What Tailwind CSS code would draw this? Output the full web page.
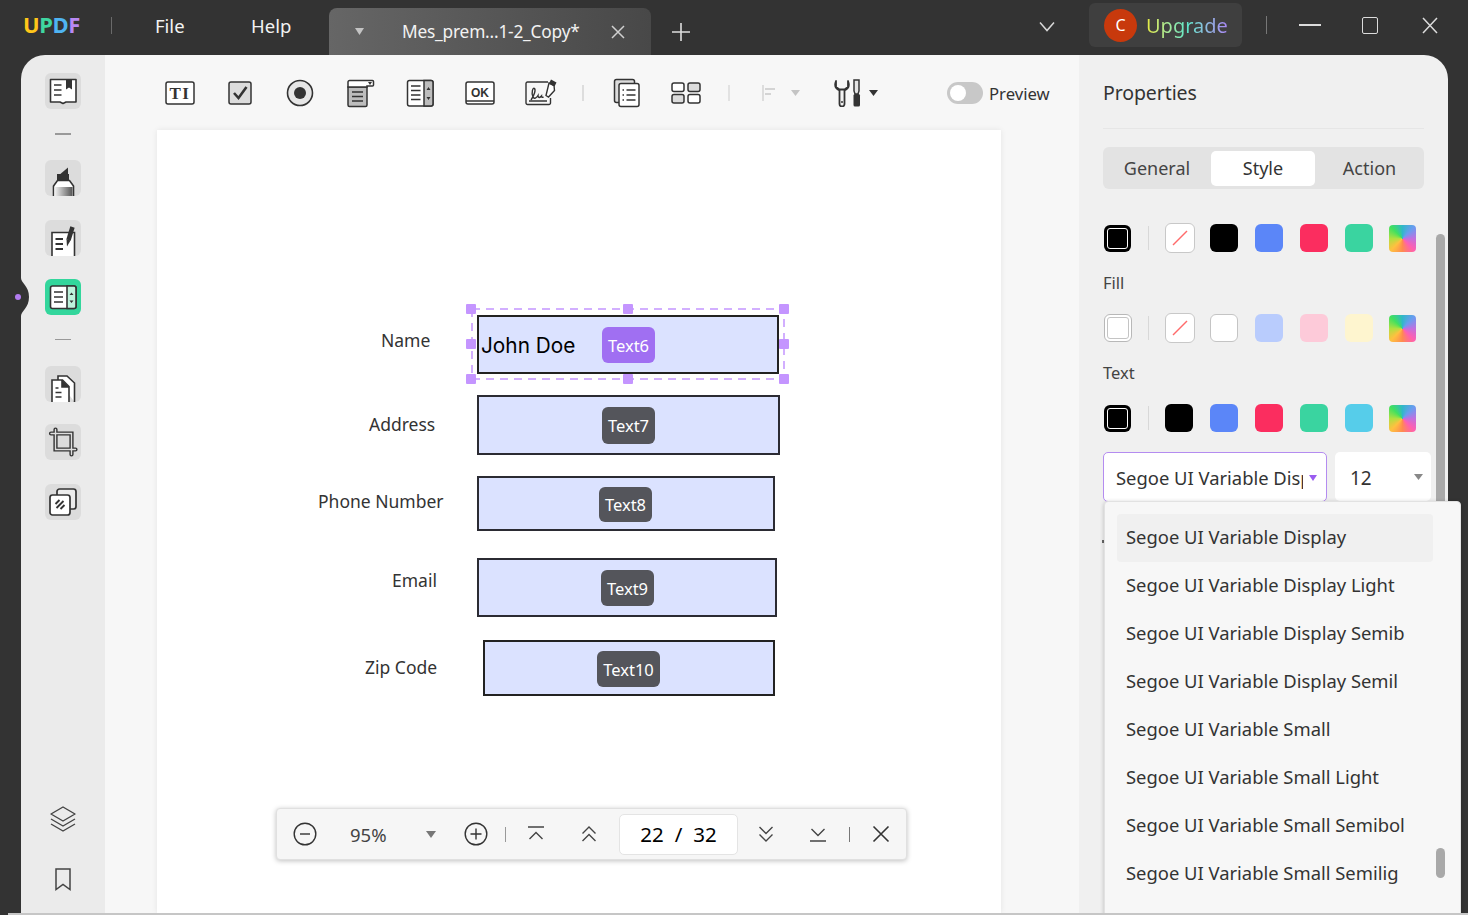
<!doctype html>
<html lang="en">
<head>
  <meta charset="utf-8">
  <script src="https://cdn.jsdelivr.net/npm/@tailwindcss/browser@4"></script>
  <title>UPDF</title>
</head>
<body class="bg-[#333333]">
<div class="relative w-[1468px] h-[915px] overflow-hidden bg-[#333333] font-['Noto_Sans',sans-serif] text-[#333333]">

  <!-- title bar -->
  <header class="flex items-start h-[55px] text-[#f2f2f2]">
    <div class="ml-[23px] w-[57px] mt-[10px] text-[22px] leading-[28px] font-bold flex tracking-[-0.4px]">
      <span class="text-[#ffc61a]">U</span><span class="text-[#3fd6a0]">P</span><span class="text-[#4fb4f2]">D</span><span class="text-[#b888f2]">F</span>
    </div>
    <div class="ml-[31px] mt-[17px] w-px h-[17px] bg-[#6a6a6a]"></div>
    <div class="ml-[43px] mt-[12px] w-[96px] text-[18.5px] leading-[28px]">File</div>
    <div class="w-[78px] mt-[12px] text-[18.5px] leading-[28px]">Help</div>
    <div class="mt-[8px] w-[322px] h-[47px] rounded-t-[8px] bg-linear-to-r from-[#666666] to-[#484848] flex items-center">
      <svg class="ml-[26px] w-[9px] h-[7px]" viewBox="0 0 9 7"><path d="M0 0h9L4.5 7z" fill="#c4c4c4"/></svg>
      <span class="ml-[38px] w-[178px] text-[17.3px] whitespace-nowrap tracking-[-0.2px]">Mes_prem...1-2_Copy*</span>
      <svg class="ml-[31px] w-[14px] h-[14px]" viewBox="0 0 14 14" fill="none" stroke="#d0d0d0" stroke-width="1.5"><path d="M1 1l12 12M13 1L1 13"/></svg>
    </div>
    <svg class="ml-[21px] mt-[23px] w-[18px] h-[18px]" viewBox="0 0 18 18" stroke="#dedede" stroke-width="1.6"><path d="M9 0v18M0 9h18"/></svg>
    <svg class="ml-[349px] mt-[21px] w-[16px] h-[11px]" viewBox="0 0 16 11" fill="none" stroke="#d8d8d8" stroke-width="1.5"><path d="M1 1.5l7 8 7-8"/></svg>
    <div class="ml-[34px] mt-[3px] w-[153px] h-[44px] rounded-[6px] bg-[#3f3f3f] flex items-center">
      <div class="ml-[15px] w-[33px] h-[33px] rounded-full bg-[#c8390c] text-white text-[16px] flex items-center justify-center">C</div>
      <span class="ml-[9px] mt-px text-[20px] bg-linear-to-r from-[#e6ea3a] via-[#5ce6c8] to-[#a884f4] bg-clip-text text-transparent">Upgrade</span>
    </div>
    <div class="ml-[24px] mt-[16px] w-px h-[18px] bg-[#777777]"></div>
    <div class="ml-[32px] mt-[24px] w-[22px] h-[1.5px] bg-[#dcdcdc]"></div>
    <div class="ml-[41px] mt-[17px] w-[16px] h-[17px] border-[1.5px] border-[#dcdcdc] rounded-[2px]"></div>
    <svg class="ml-[44px] mt-[17px] w-[16px] h-[17px]" viewBox="0 0 16 17" fill="none" stroke="#dcdcdc" stroke-width="1.5"><path d="M1 1l14 15M15 1L1 16"/></svg>
  </header>

  <!-- workspace -->
  <main class="ml-[21px] w-[1427px] h-[858px] flex rounded-t-[24px] overflow-hidden">
    <!-- left rail -->
    <aside class="w-[84px] bg-[#ebebeb] flex flex-col items-center shrink-0">
      <div class="mt-[18px] w-[36px] h-[36px] rounded-[6px] bg-[#dcdcdc]">
        <svg viewBox="0 0 36 36" fill="none" stroke="#333" stroke-width="1.6"><path d="M5.5 6.5h25.500v22.500h-10l-3 1.500-3-1.500h-9.500z" fill="#fff" stroke-linejoin="round"/><path d="M9 12h7.500M9 17h7.500M9 22h7.500"/><path d="M21 6h6v10.500l-3-2-3 2z" fill="#333" stroke="none"/></svg>
      </div>
      <div class="mt-[24px] w-[16px] h-[1.5px] bg-[#999999]"></div>
      <div class="mt-[25px] w-[36px] h-[36px] rounded-[6px] bg-[#dcdcdc] overflow-hidden">
        <svg viewBox="0 0 36 36" fill="none" stroke="#333" stroke-width="1.6"><defs><linearGradient id="hl" x1="0" x2="1"><stop offset="0" stop-color="#f4f4f4"/><stop offset="1" stop-color="#555"/></linearGradient></defs><path d="M13 16l10-8.500v8.500z" fill="#333" stroke="none"/><rect x="12" y="14" width="12" height="6" fill="#333" stroke="none"/><path d="M8.500 36v-10l4-5.500h12l4 5.500v10" fill="#fff"/><rect x="9.500" y="27" width="18" height="9" fill="url(#hl)" stroke="none"/></svg>
      </div>
      <div class="mt-[24px] w-[36px] h-[36px] rounded-[6px] bg-[#dcdcdc] overflow-hidden">
        <svg viewBox="0 0 36 36" fill="none" stroke="#333" stroke-width="1.6"><path d="M7 36V12.500h22.500V36" fill="#fff"/><path d="M10.500 19h7.500M10.500 24h7.500M10.500 29h7.500" stroke-width="1.800"/><path d="M27.500 7l-4 13" stroke-width="4.500"/><path d="M21.500 19l4 1.500-3.500 6z" fill="#333" stroke="none"/></svg>
      </div>
      <div class="mt-[23px] w-[36px] h-[36px] rounded-[6px] bg-[#33d69c]">
        <svg viewBox="0 0 36 36" fill="none" stroke="#333" stroke-width="1.6"><rect x="5.500" y="7" width="25.500" height="22.500" rx="2" fill="#fff"/><path d="M22 7h7a2 2 0 0 1 2 2v18.500a2 2 0 0 1-2 2h-7z" fill="#bdf2dc"/><path d="M9 13h9M9 18h9M9 23h9"/><path d="M26.500 13.500l-2 2.500h4zM26.500 24l-2-2.500h4z" fill="#333" stroke="none"/></svg>
      </div>
      <div class="mt-[24px] w-[16px] h-px bg-[#999999]"></div>
      <div class="mt-[26px] w-[36px] h-[36px] rounded-[6px] bg-[#dcdcdc] overflow-hidden">
        <svg viewBox="0 0 36 36" fill="none" stroke="#333" stroke-width="1.600"><path d="M13 14v-4h9l7.500 7v19" fill="#fff"/><path d="M7 36V14h10.500l6.500 6.500V36" fill="#fff"/><path d="M17 14v7h7" fill="#333"/><path d="M10.500 22h3M10.500 26.500h6M10.500 31h6"/></svg>
      </div>
      <div class="mt-[22px] w-[36px] h-[36px] rounded-[6px] bg-[#dcdcdc]">
        <svg viewBox="0 0 36 36" fill="none"><g stroke="#333" stroke-width="4.200" stroke-linecap="round"><path d="M10.500 5.500v20h20M6 9.500h20.500v21"/></g><g stroke="#dedede" stroke-width="1.400" stroke-linecap="round"><path d="M10.500 5.500v20h20M6 9.500h20.500v21"/></g></svg>
      </div>
      <div class="mt-[24px] w-[36px] h-[36px] rounded-[6px] bg-[#dcdcdc]">
        <svg viewBox="0 0 36 36" fill="none" stroke="#333" stroke-width="1.700"><rect x="12" y="5" width="19" height="20" rx="2.500" fill="#ececec"/><rect x="5" y="11" width="20" height="20" rx="2.500" fill="#fff"/><path d="M10.500 20l4-4M11.500 24l7-7M15.500 25l4-4" stroke-width="1.900"/></svg>
      </div>
      <svg class="mt-[285px] w-[26px] h-[28px]" viewBox="0 0 26 28" fill="none" stroke="#444" stroke-width="1.400" stroke-linejoin="round"><path d="M13 2l12 7-12 7-12-7z"/><path d="M1 14l12 7 12-7M1 19l12 7 12-7"/></svg>
      <svg class="mt-[35px] w-[16px] h-[23px]" viewBox="0 0 16 23" fill="none" stroke="#444" stroke-width="1.500"><path d="M1 1h14v20.500l-7-5-7 5z"/></svg>
    </aside>

    <!-- centre -->
    <section class="relative w-[974px] bg-[#f7f7f7] flex flex-col shrink-0">
      <div class="h-[75px] flex items-center shrink-0">
        <div class="ml-[60px] w-[30px] h-[30px]">
          <svg viewBox="0 0 30 30" fill="none" stroke="#333" stroke-width="1.500"><rect x="1" y="4" width="28" height="22" rx="2" fill="#fff"/><text x="15" y="21" text-anchor="middle" font-family="Liberation Serif" font-size="17" font-weight="700" letter-spacing="1.500" fill="#333" stroke="none">TI</text></svg>
        </div>
        <div class="ml-[30px] w-[30px] h-[30px]">
          <svg viewBox="0 0 30 30" fill="none" stroke="#333" stroke-width="1.500"><rect x="4" y="4" width="22" height="22" rx="2" fill="#dcdcdc"/><path d="M9 15l4.500 5 8-11" stroke-width="2.600"/></svg>
        </div>
        <div class="ml-[30px] w-[30px] h-[30px]">
          <svg viewBox="0 0 30 30" fill="none"><circle cx="15" cy="15" r="12.500" fill="#e6e6e6" stroke="#333" stroke-width="1.600"/><circle cx="15" cy="15" r="6" fill="#333"/></svg>
        </div>
        <div class="ml-[30px] w-[30px] h-[30px]">
          <svg viewBox="0 0 30 30" fill="none" stroke="#333" stroke-width="1.500"><path d="M3 9h19v18a1.500 1.500 0 0 1-1.500 1.500h-16A1.500 1.500 0 0 1 3 27z" fill="#bdbdbd"/><path d="M4.500 2.500H27.500a1 1 0 0 1 1 1V7a1 1 0 0 1-1 1H22V9H3V4a1.500 1.500 0 0 1 1.500-1.500z" fill="#fff"/><path d="M7 14h11M7 18.500h11M7 23h11"/><path d="M23 4h4l-2 3z" fill="#333" stroke="none"/></svg>
        </div>
        <div class="ml-[30px] w-[30px] h-[30px]">
          <svg viewBox="0 0 30 30" fill="none" stroke="#333" stroke-width="1.500"><rect x="2.500" y="2.500" width="25.500" height="25.500" rx="2" fill="#fff"/><path d="M19 2.500h7a2 2 0 0 1 2 2V26a2 2 0 0 1-2 2h-7z" fill="#bdbdbd"/><path d="M6 8h9.500M6 12.500h9.500M6 17h9.500M6 21.500h9.500"/><path d="M23.500 9l-2 3h4zM23.500 22l-2-3h4z" fill="#333" stroke="none"/></svg>
        </div>
        <div class="ml-[30px] w-[30px] h-[30px]">
          <svg viewBox="0 0 30 30" fill="none" stroke="#333" stroke-width="1.500"><rect x="1" y="4" width="28" height="22" rx="2" fill="#fff"/><path d="M1 23h28" /><text x="15" y="18.500" text-anchor="middle" font-family="Liberation Sans" font-size="12" font-weight="700" fill="#333" stroke="none">OK</text></svg>
        </div>
        <div class="ml-[30px] w-[34px] h-[30px]">
          <svg viewBox="0 0 34 30" fill="none" stroke="#333" stroke-width="1.400"><path d="M23 4H2.500a1.500 1.500 0 0 0-1.500 1.500V25a1.500 1.500 0 0 0 1.500 1.500H24a1.500 1.500 0 0 0 1.500-1.500v-5"/><path d="M6 22c3-4 5-10 3.500-11.500S6 14 8 19c1 2.500 3.500 1 5-1.500 0 2.500 2 2.500 3.500.5 0 1.500 1 1.500 2 1"/><path d="M4 23h18"/><path d="M24 5l5 2.500 .5 5-6 6.500-2.500-1.500z" fill="#fff"/><path d="M26 1.500l5.500 3-2 4-5.500-3z" fill="#333" stroke="none"/></svg>
        </div>
        <div class="ml-[23px] w-[2px] h-[16px] bg-[#dddddd]"></div>
        <div class="ml-[29px] w-[30px] h-[30px]">
          <svg viewBox="0 0 30 30" fill="none" stroke="#333" stroke-width="1.500"><rect x="1.500" y="1.500" width="20" height="23" rx="2" fill="#dcdcdc"/><rect x="6" y="5.500" width="20" height="23" rx="2" fill="#fff"/><path d="M13.500 12h9M13.500 17h9M13.500 22h9M9.500 12h1.500M9.500 17h1.500M9.500 22h1.500"/></svg>
        </div>
        <div class="ml-[28px] w-[30px] h-[22px]">
          <svg viewBox="0 0 30 22" fill="none" stroke="#333" stroke-width="1.500"><rect x="1" y="1" width="12" height="8.500" rx="2" fill="#fff"/><rect x="17" y="1" width="12" height="8.500" rx="2" fill="#dcdcdc"/><rect x="1" y="12.500" width="12" height="8.500" rx="2" fill="#dcdcdc"/><rect x="17" y="12.500" width="12" height="8.500" rx="2" fill="#fff"/></svg>
        </div>
        <div class="ml-[27px] w-[2px] h-[16px] bg-[#e2e2e2]"></div>
        <div class="ml-[31px] w-[20px] h-[18px]">
          <svg viewBox="0 0 20 18" fill="none" stroke="#d4d4d4" stroke-width="2"><path d="M2 1v16" stroke-width="1.500"/><path d="M4 5h10M4 10h6"/></svg>
        </div>
        <svg class="ml-[10px] w-[9px] h-[6px]" viewBox="0 0 9 6"><path d="M0 0h9L4.500 6z" fill="#c4c4c4"/></svg>
        <div class="ml-[34px] w-[30px] h-[28px]">
          <svg viewBox="0 0 30 28" fill="none" stroke="#333" stroke-width="1.800"><path d="M2 2c-2 5 0 8 3.500 9.500V25a2.500 2.500 0 0 0 5 0V11.500C14 10 16 7 14 2v6l-3.500 2.500h-5L2 8z" fill="#f2f2f2" stroke-linejoin="round"/><circle cx="8" cy="23" r="1" fill="#333" stroke="none"/><path d="M20 1h5v11l-1 3h-3l-1-3z" fill="#e4e4e4" stroke-width="1.500"/><rect x="19.500" y="15" width="6.500" height="12.500" rx="1.500" fill="#333" stroke="none"/></svg>
        </div>
        <svg class="ml-[5px] w-[9px] h-[6px]" viewBox="0 0 9 6"><path d="M0 0h9L4.500 6z" fill="#333"/></svg>
        <div class="ml-[69px] w-[36px] h-[22px] rounded-full bg-[#c8c8c8] flex items-center">
          <div class="ml-[3px] w-[16px] h-[16px] rounded-full bg-white"></div>
        </div>
        <span class="ml-[6px] mt-[2px] text-[16.7px] whitespace-nowrap">Preview</span>
      </div>

      <div class="ml-[52px] w-[844px] flex-1 relative bg-white shadow-[0_0_6px_rgba(0,0,0,0.08)]">
        <span class="absolute left-[224px] top-[197px] text-[17.5px] leading-[26px]">Name</span>
        <span class="absolute left-[212px] top-[281px] text-[17.5px] leading-[26px]">Address</span>
        <span class="absolute left-[161px] top-[358px] text-[17.5px] leading-[26px]">Phone Number</span>
        <span class="absolute left-[235px] top-[437px] text-[17.5px] leading-[26px]">Email</span>
        <span class="absolute left-[208px] top-[524px] text-[17.5px] leading-[26px]">Zip Code</span>

        <div class="absolute left-[320px] top-[185px] w-[302px] h-[59px] border-2 border-[#222222] bg-[#dbe2ff] flex items-center pl-[2px] pt-[3px] text-[20.8px] text-black font-['Inter',sans-serif]">John Doe</div>
        <div class="absolute left-[320px] top-[265px] w-[303px] h-[60px] border-2 border-[#2b2b33] bg-[#dbe2ff]"></div>
        <div class="absolute left-[320px] top-[346px] w-[298px] h-[55px] border-2 border-[#2b2b33] bg-[#dbe2ff]"></div>
        <div class="absolute left-[320px] top-[428px] w-[300px] h-[59px] border-2 border-[#2b2b33] bg-[#dbe2ff]"></div>
        <div class="absolute left-[326px] top-[510px] w-[292px] h-[56px] border-2 border-[#222222] bg-[#dbe2ff]"></div>

        <div class="absolute left-[445px] top-[197px] w-[53px] h-[36px] rounded-[6px] pt-[2px] bg-[#a06ff2] text-white text-[16.5px] flex items-center justify-center">Text6</div>
        <div class="absolute left-[445px] top-[277px] w-[53px] h-[37px] rounded-[6px] pt-[2px] bg-[#54555b] text-white text-[16.5px] flex items-center justify-center">Text7</div>
        <div class="absolute left-[442px] top-[357px] w-[53px] h-[35px] rounded-[6px] pt-[2px] bg-[#54555b] text-white text-[16.5px] flex items-center justify-center">Text8</div>
        <div class="absolute left-[444px] top-[440px] w-[53px] h-[36px] rounded-[6px] pt-[2px] bg-[#54555b] text-white text-[16.5px] flex items-center justify-center">Text9</div>
        <div class="absolute left-[440px] top-[521px] w-[63px] h-[36px] rounded-[6px] pt-[2px] bg-[#54555b] text-white text-[16.5px] flex items-center justify-center">Text10</div>

        <!-- selection box -->
        <svg class="absolute left-[314px] top-[178px] w-[314px] h-[72px]" viewBox="0 0 314 72" fill="none"><rect x="1" y="1" width="312" height="70" stroke="#c495ff" stroke-width="1.500" stroke-dasharray="8 6"/></svg>
        <div class="absolute left-[309px] top-[174px] w-[10px] h-[10px] rounded-[1px] bg-[#c495ff]"></div>
        <div class="absolute left-[466px] top-[174px] w-[10px] h-[10px] rounded-[1px] bg-[#c495ff]"></div>
        <div class="absolute left-[622px] top-[174px] w-[10px] h-[10px] rounded-[1px] bg-[#c495ff]"></div>
        <div class="absolute left-[309px] top-[209px] w-[10px] h-[10px] rounded-[1px] bg-[#c495ff]"></div>
        <div class="absolute left-[622px] top-[209px] w-[10px] h-[10px] rounded-[1px] bg-[#c495ff]"></div>
        <div class="absolute left-[309px] top-[244px] w-[10px] h-[10px] rounded-[1px] bg-[#c495ff]"></div>
        <div class="absolute left-[466px] top-[244px] w-[10px] h-[10px] rounded-[1px] bg-[#c495ff]"></div>
        <div class="absolute left-[622px] top-[244px] w-[10px] h-[10px] rounded-[1px] bg-[#c495ff]"></div>
      </div>

      <!-- floating page bar -->
      <div class="absolute left-[171px] top-[753px] w-[631px] h-[52px] rounded-[4px] bg-[#f6f6f6] border border-[#e0e0e0] shadow-[0_1px_5px_rgba(0,0,0,0.25)] flex items-center">
        <svg class="ml-[16px] w-[24px] h-[24px]" viewBox="0 0 24 24" fill="none" stroke="#333" stroke-width="1.400"><circle cx="12" cy="12" r="10.800"/><path d="M7 12h10"/></svg>
        <span class="ml-[33px] mt-[2px] w-[76px] text-[18.5px] text-[#444444]">95%</span>
        <svg class="w-[10px] h-[7px]" viewBox="0 0 10 7"><path d="M0 0h10L5 7z" fill="#777"/></svg>
        <svg class="ml-[28px] w-[24px] h-[24px]" viewBox="0 0 24 24" fill="none" stroke="#333" stroke-width="1.400"><circle cx="12" cy="12" r="10.800"/><path d="M6.500 12h11M12 6.500v11"/></svg>
        <div class="ml-[17px] w-px h-[15px] bg-[#999999]"></div>
        <svg class="ml-[21px] w-[18px] h-[16px]" viewBox="0 0 18 16" fill="none" stroke="#444" stroke-width="1.400"><path d="M1 1h16M2.500 13L9 6.500l6.500 6.500"/></svg>
        <svg class="ml-[35px] w-[18px] h-[18px]" viewBox="0 0 18 18" fill="none" stroke="#444" stroke-width="1.400"><path d="M2.500 8.500L9 2l6.500 6.500M2.500 16L9 9.500l6.500 6.500"/></svg>
        <div class="ml-[21px] w-[119px] h-[41px] rounded-[5px] bg-white border border-[#e4e4e4] flex items-center justify-center text-black text-[20.5px] gap-[11px]">
          <span>22</span><span>/</span><span>32</span>
        </div>
        <svg class="ml-[19px] w-[18px] h-[18px]" viewBox="0 0 18 18" fill="none" stroke="#444" stroke-width="1.400"><path d="M2.500 2L9 8.500 15.500 2M2.500 9.500L9 16l6.500-6.500"/></svg>
        <svg class="ml-[34px] w-[18px] h-[16px]" viewBox="0 0 18 16" fill="none" stroke="#444" stroke-width="1.400"><path d="M2.500 3L9 9.500 15.500 3M1 15h16"/></svg>
        <div class="ml-[22px] w-px h-[15px] bg-[#777777]"></div>
        <svg class="ml-[22px] w-[18px] h-[18px]" viewBox="0 0 18 18" fill="none" stroke="#333" stroke-width="1.600"><path d="M1.500 1.500l15 15M16.500 1.500l-15 15"/></svg>
      </div>
    </section>

    <!-- properties -->
    <aside class="relative w-[369px] shrink-0 bg-[#f0f0f0] pl-[24px] pr-[24px]">
      <div class="h-[74px] border-b border-[#e6e6e6] pt-[23px] text-[19.5px] leading-[30px] tracking-[-0.1px]">Properties</div>
      <div class="mt-[18px] h-[42px] rounded-[6px] bg-[#e3e3e3] flex items-center text-[18px]">
        <div class="w-[108px] pt-px text-center text-[#444444]">General</div>
        <div class="w-[104px] h-[35px] pt-px rounded-[5px] bg-white flex items-center justify-center">Style</div>
        <div class="flex-1 pt-px text-center text-[#444444]">Action</div>
      </div>

      <div class="mt-[35px] h-[28px] flex items-center">
        <div class="ml-px w-[27px] h-[27px] rounded-[6px] bg-black p-[3px]"><div class="w-full h-full border-[1.5px] border-white rounded-[3px]"></div></div>
        <div class="ml-[17px] w-px h-[24px] bg-[#d8d8d8]"></div>
        <div class="ml-[16px] w-[30px] h-[30px] rounded-[6px] bg-white border border-[#c8c8c8] flex items-center justify-center"><svg class="w-[16px] h-[16px]" viewBox="0 0 16 16"><path d="M1 15L15 1" stroke="#ff6b6b" stroke-width="1.400"/></svg></div>
        <div class="ml-[15px] w-[28px] h-[28px] rounded-[6px] bg-black"></div>
        <div class="ml-[17px] w-[28px] h-[28px] rounded-[6px] bg-[#5b86f8]"></div>
        <div class="ml-[17px] w-[28px] h-[28px] rounded-[6px] bg-[#fb2d5f]"></div>
        <div class="ml-[17px] w-[28px] h-[28px] rounded-[6px] bg-[#3ad4a0]"></div>
        <div class="ml-[16px] w-[27px] h-[27px] rounded-[4px] bg-[conic-gradient(#30b8c8,#6a9cf0,#c070e0,#ff60b0,#ff8a50,#ffc040,#b0e040,#40e060,#30b8c8)]"></div>
      </div>
      <div class="mt-[18px] h-[26px] leading-[26px] text-[16.5px] text-[#444444]">Fill</div>
      <div class="mt-[18px] h-[28px] flex items-center">
        <div class="ml-px w-[28px] h-[28px] rounded-[6px] bg-white border-[1.5px] border-[#b8b8b8] p-[2px]"><div class="w-full h-full border border-[#c4c4c4] rounded-[3px]"></div></div>
        <div class="ml-[16px] w-px h-[24px] bg-[#d8d8d8]"></div>
        <div class="ml-[16px] w-[30px] h-[30px] rounded-[6px] bg-white border border-[#c8c8c8] flex items-center justify-center"><svg class="w-[16px] h-[16px]" viewBox="0 0 16 16"><path d="M1 15L15 1" stroke="#ff6b6b" stroke-width="1.400"/></svg></div>
        <div class="ml-[15px] w-[28px] h-[28px] rounded-[6px] bg-white border-[1.5px] border-[#c4c4c4]"></div>
        <div class="ml-[17px] w-[28px] h-[28px] rounded-[6px] bg-[#b9ccfd]"></div>
        <div class="ml-[17px] w-[28px] h-[28px] rounded-[6px] bg-[#fdcad9]"></div>
        <div class="ml-[17px] w-[28px] h-[28px] rounded-[6px] bg-[#fef5cf]"></div>
        <div class="ml-[16px] w-[27px] h-[27px] rounded-[4px] bg-[conic-gradient(#30b8c8,#6a9cf0,#c070e0,#ff60b0,#ff8a50,#ffc040,#b0e040,#40e060,#30b8c8)]"></div>
      </div>
      <div class="mt-[18px] h-[26px] leading-[26px] text-[16.5px] text-[#444444]">Text</div>
      <div class="mt-[18px] h-[28px] flex items-center">
        <div class="ml-px w-[27px] h-[27px] rounded-[6px] bg-black p-[3px]"><div class="w-full h-full border-[1.5px] border-white rounded-[3px]"></div></div>
        <div class="ml-[17px] w-px h-[24px] bg-[#d8d8d8]"></div>
        <div class="ml-[16px] w-[28px] h-[28px] rounded-[6px] bg-black"></div>
        <div class="ml-[17px] w-[28px] h-[28px] rounded-[6px] bg-[#5b86f8]"></div>
        <div class="ml-[17px] w-[28px] h-[28px] rounded-[6px] bg-[#fb2d5f]"></div>
        <div class="ml-[17px] w-[28px] h-[28px] rounded-[6px] bg-[#3ad4a0]"></div>
        <div class="ml-[17px] w-[28px] h-[28px] rounded-[6px] bg-[#56cdea]"></div>
        <div class="ml-[16px] w-[27px] h-[27px] rounded-[4px] bg-[conic-gradient(#30b8c8,#6a9cf0,#c070e0,#ff60b0,#ff8a50,#ffc040,#b0e040,#40e060,#30b8c8)]"></div>
      </div>
      <div class="mt-[20px] flex w-[328px]">
        <div class="w-[224px] h-[50px] rounded-[5px] bg-white border-[1.5px] border-[#b48cf0] flex items-center pl-[12px] pt-[2px] text-[18.4px]">
          <span class="w-[187px] overflow-hidden whitespace-nowrap">Segoe UI Variable Display</span>
          <svg class="ml-[6px] w-[8px] h-[6px]" viewBox="0 0 8 6"><path d="M0 0h8L4 6z" fill="#9a5cf0"/></svg>
        </div>
        <div class="ml-[8px] w-[96px] h-[49px] rounded-[5px] bg-white flex items-center pl-[15px] pt-[4px] text-[19px]">
          <span class="w-[64px]">12</span>
          <svg class="-mt-[4px] w-[9px] h-[6px]" viewBox="0 0 9 6"><path d="M0 0h9L4.500 6z" fill="#888"/></svg>
        </div>
      </div>
      <div class="absolute left-[357px] top-[179px] w-[9px] h-[700px] rounded-full bg-[#a9a9a9]"></div>
    </aside>
  </main>

  <!-- active tool marker on the rail -->
  <svg class="absolute left-[12px] top-[278px] w-[18px] h-[38px]" viewBox="0 0 18 38"><path d="M9 0c0 5 8 8 8 19S9 33 9 38z" fill="#333"/></svg>
  <div class="absolute left-[15px] top-[294px] w-[6px] h-[6px] rounded-full bg-[#b27cf0]"></div>

  <!-- font menu -->
  <div class="absolute left-[1102px] top-[540px] w-[2px] h-[3px] bg-[#666666]"></div>
  <div class="absolute left-[1104px] top-[501px] w-[357px] h-[420px] rounded-[4px] bg-[#f7f7f7] border border-[#e2e2e2] shadow-[0_1px_4px_rgba(0,0,0,0.22)] pl-[12px] pt-[12px] text-[18.4px] overflow-hidden">
    <div class="w-[316px] h-[48px] rounded-[4px] bg-[#f0f0f0] pl-[9px] leading-[46px]">Segoe UI Variable Display</div>
    <div class="h-[48px] pl-[9px] leading-[46px]">Segoe UI Variable Display Light</div>
    <div class="h-[48px] pl-[9px] leading-[46px]">Segoe UI Variable Display Semib</div>
    <div class="h-[48px] pl-[9px] leading-[46px]">Segoe UI Variable Display Semil</div>
    <div class="h-[48px] pl-[9px] leading-[46px]">Segoe UI Variable Small</div>
    <div class="h-[48px] pl-[9px] leading-[46px]">Segoe UI Variable Small Light</div>
    <div class="h-[48px] pl-[9px] leading-[46px]">Segoe UI Variable Small Semibol</div>
    <div class="h-[48px] pl-[9px] leading-[46px]">Segoe UI Variable Small Semilig</div>
    <div class="h-[48px] pl-[9px] leading-[46px]">Segoe UI Variable Text</div>
    <div class="absolute left-[331px] top-[346px] w-[9px] h-[30px] rounded-full bg-[#a9a9a9]"></div>
  </div>

  <div class="absolute left-[8px] right-0 bottom-0 h-[2px] bg-[#c6c6c6]"></div>
</div>
</body>
</html>
